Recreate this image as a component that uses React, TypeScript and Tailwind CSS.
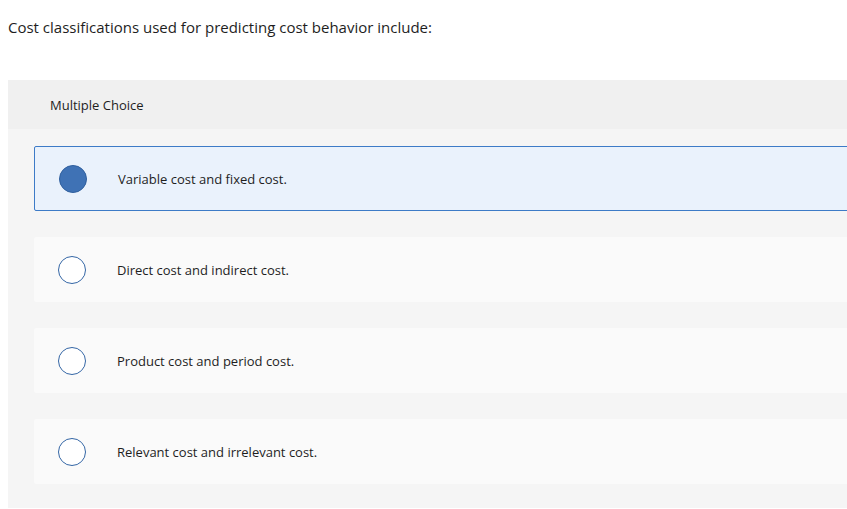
import React from 'react';

const options = [
  'Variable cost and fixed cost.',
  'Direct cost and indirect cost.',
  'Product cost and period cost.',
  'Relevant cost and irrelevant cost.',
];

export default function App() {
  const selected = 0;
  return (
    <div
      className="w-[847px] h-[509px] overflow-hidden bg-white text-[#1e1e1e]"
      style={{ fontFamily: '"Open Sans", Lato, sans-serif' }}
    >
      <div className="pl-2 pt-[17px] h-[80px] text-[15px] leading-[20px]">
        Cost classifications used for predicting cost behavior include:
      </div>

      <div className="ml-2 w-[900px] bg-[#f5f5f5]">
        <div className="h-[49px] bg-[#f0f0f0] pl-[42px] flex items-center text-[13px]">
          <span className="mt-[2px]">Multiple Choice</span>
        </div>
        <div className="pl-[26px] pt-[17px] pb-6 flex flex-col gap-[26px]">
          {options.map((label, i) => (
            <Option key={label} label={label} active={i === selected} />
          ))}
        </div>
      </div>
    </div>
  );
}

function Option({ label, active }: { label: string; active: boolean }) {
  return (
    <div
      className={
        'h-[65px] flex items-center rounded-[2px] ' +
        (active ? 'bg-[#eaf2fc] border border-[#3d7bc7]' : 'bg-[#fafafa]')
      }
    >
      <span
        className={
          'ml-[24px] w-[28px] h-[28px] rounded-full shrink-0 border ' +
          (active ? 'bg-[#3f72b5] border-[#2f5f9e]' : 'bg-white border-[#3466a5]')
        }
      />
      <span className="ml-[31px] mt-[2px] text-[13px]">{label}</span>
    </div>
  );
}
